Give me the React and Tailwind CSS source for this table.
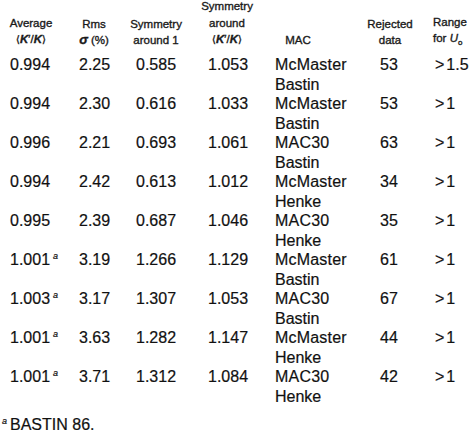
import React from "react";

const rows = [
  ["0.994", "", "2.25", "0.585", "1.053", "McMaster", "Bastin", "53", ">1.5"],
  ["0.994", "", "2.30", "0.616", "1.033", "McMaster", "Bastin", "53", ">1"],
  ["0.996", "", "2.21", "0.693", "1.061", "MAC30", "Bastin", "63", ">1"],
  ["0.994", "", "2.42", "0.613", "1.012", "McMaster", "Henke", "34", ">1"],
  ["0.995", "", "2.39", "0.687", "1.046", "MAC30", "Henke", "35", ">1"],
  ["1.001", "a", "3.19", "1.266", "1.129", "McMaster", "Bastin", "61", ">1"],
  ["1.003", "a", "3.17", "1.307", "1.053", "MAC30", "Bastin", "67", ">1"],
  ["1.001", "a", "3.63", "1.282", "1.147", "McMaster", "Henke", "44", ">1"],
  ["1.001", "a", "3.71", "1.312", "1.084", "MAC30", "Henke", "42", ">1"],
];

const grid = "grid grid-cols-[70px_58px_72px_70px_90px_65px_49px]";

function KK() {
  return (
    <span>
      <span style={{ fontFamily: '"DejaVu Sans", sans-serif' }} className="text-[10px]">⟨</span>
      <span className="italic font-bold">K</span>′/<span className="italic font-bold">K</span>
      <span style={{ fontFamily: '"DejaVu Sans", sans-serif' }} className="text-[10px]">⟩</span>
    </span>
  );
}

export default function App() {
  return (
    <div
      className="w-[474px] h-[434px] bg-white text-[#111] overflow-hidden"
      style={{ fontFamily: '"Liberation Sans", Arial, sans-serif' }}
    >
      <div className={`${grid} items-end text-[11.5px] leading-[16.5px] text-[#1a1a1a] -mt-[2px] [-webkit-text-stroke:0.35px]`}>
        <div className="flex flex-col items-center pr-[8px]">
          <span>Average</span>
          <KK />
        </div>
        <div className="flex flex-col items-center pr-[10px]">
          <span>Rms</span>
          <span>
            <span className="italic font-bold text-[13px]">σ</span> (%)
          </span>
        </div>
        <div className="flex flex-col items-center pr-[16px]">
          <span>Symmetry</span>
          <span>around 1</span>
        </div>
        <div className="flex flex-col items-center pr-[16px]">
          <span>Symmetry</span>
          <span>around</span>
          <KK />
        </div>
        <div className="flex flex-col items-center pr-[34px]">
          <span>MAC</span>
        </div>
        <div className="flex flex-col items-center pr-[5px]">
          <span>Rejected</span>
          <span>data</span>
        </div>
        <div className="flex flex-col items-start pl-[8px]">
          <span>Range</span>
          <span className="whitespace-nowrap">
            for <span className="italic">U</span>
            <span className="text-[8px] relative top-[3px]">o</span>
          </span>
        </div>
      </div>

      <div className="pt-[6.75px] text-[16px] leading-[19.5px] [-webkit-text-stroke:0.2px]">
        {rows.map((r, i) => (
          <div key={i} className={`${grid} h-[39px]`}>
            <div className="pl-[10px] whitespace-nowrap">
              {r[0]}
              {r[1] && (
                <span className="text-[9px] italic relative -top-[6px] ml-[3px]">a</span>
              )}
            </div>
            <div className="pl-[9px]">{r[2]}</div>
            <div className="pl-[8px]">{r[3]}</div>
            <div className="pl-[8px]">{r[4]}</div>
            <div className="pl-[5px] flex flex-col">
              <span className="tracking-[0.2px]">{r[5]}</span>
              <span>{r[6]}</span>
            </div>
            <div className="pl-[20px]">{r[7]}</div>
            <div className="pl-[10px] whitespace-nowrap">
              &gt;<span className="ml-[2px]">{r[8].slice(1)}</span>
            </div>
          </div>
        ))}
      </div>

      <div className="pt-[9px] pl-[2px] text-[16px] leading-[19.5px] whitespace-nowrap [-webkit-text-stroke:0.2px]">
        <span className="text-[9px] italic relative -top-[6px] mr-[3px]">a</span>
        BASTIN 86.
      </div>
    </div>
  );
}
